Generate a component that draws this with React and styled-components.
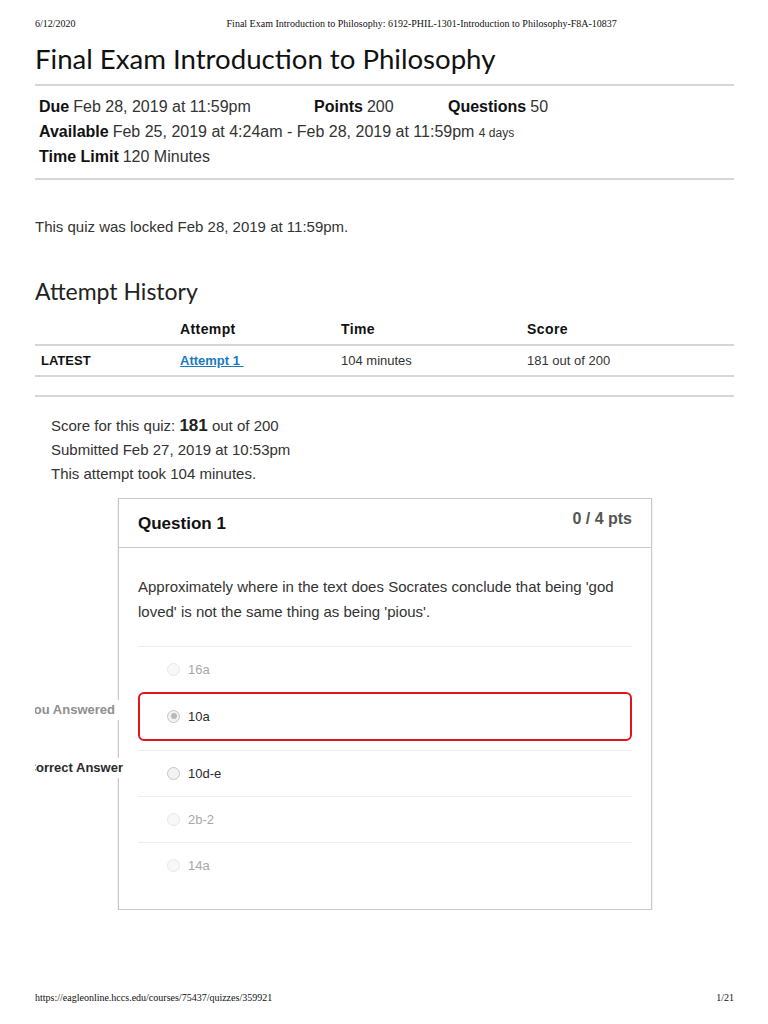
import React from "react";
import styled, { createGlobalStyle } from "styled-components";

const GlobalStyle = createGlobalStyle`
  html, body {
    margin: 0;
    padding: 0;
    background: #fff;
  }
  body {
    font-family: "Liberation Sans", Arial, sans-serif;
    color: #2d2d2d;
  }
`;

const Page = styled.div`
  min-height: 1024px;
  box-sizing: border-box;
  padding: 0 34px 20px 35px;
  display: flex;
  flex-direction: column;
`;

const PrintBar = styled.div`
  display: flex;
  justify-content: space-between;
  font-family: "Liberation Serif", "Times New Roman", serif;
  font-size: 10px;
  line-height: 12px;
  color: #111;

  span.title {
    margin-left: 151px;
    margin-right: auto;
  }
`;

const TopBar = styled(PrintBar)`
  padding-top: 18px;
`;

const BottomBar = styled(PrintBar)`
  margin-top: auto;
`;

const Content = styled.main`
  overflow: hidden;
`;

const Title = styled.h1`
  margin: 12px 0 8px;
  font-family: Lato, "Noto Sans", sans-serif;
  font-weight: 400;
  font-size: 27.6px;
  line-height: 34px;
  color: #111;
`;

const Rule = styled.hr`
  margin: ${(p) => p.$mt || 0}px 0 0;
  border: none;
  border-top: 2px solid #d6d6d6;
`;

const Details = styled.div`
  padding: 9px 0 8px 4px;
  border-bottom: 2px solid #d6d6d6;
`;

const DetailRow = styled.div`
  display: flex;
  font-size: 16px;
  line-height: 24.5px;
  color: #333;
`;

const DetailItem = styled.div`
  width: ${(p) => (p.$w ? `${p.$w}px` : "auto")};
  white-space: nowrap;

  b {
    color: #111;
    margin-right: 4px;
  }
  small {
    font-size: 12px;
  }
`;

const Locked = styled.p`
  margin: 37px 0 0;
  font-size: 15px;
  line-height: 20px;
  color: #333;
`;

const SubTitle = styled.h2`
  margin: 40px 0 0;
  font-family: Lato, "Noto Sans", sans-serif;
  font-weight: 400;
  font-size: 23px;
  line-height: 28px;
  color: #222;
`;

const TableRow = styled.div`
  display: grid;
  grid-template-columns: 145px 161px 186px 1fr;
  align-items: center;
  height: 29px;
  margin-top: ${(p) => (p.$head ? 10 : 0)}px;
  border-bottom: 2px solid #d6d6d6;
  font-size: ${(p) => (p.$head ? 14 : 13)}px;
  font-weight: ${(p) => (p.$head ? 700 : 400)};
  letter-spacing: ${(p) => (p.$head ? "0.4px" : "0")};
  color: ${(p) => (p.$head ? "#111" : "#333")};

  > :first-child {
    padding-left: 6px;
  }
`;

const Latest = styled.span`
  font-weight: 700;
  color: #111;
`;

const AttemptLink = styled.a`
  color: #1b79c0;
  font-weight: 700;
  text-decoration: underline;
  white-space: pre;
`;

const Summary = styled.div`
  padding: 16px 0 0 16px;
  font-size: 15px;
  color: #333;
`;

const SummaryLine = styled.div`
  line-height: ${(p) => p.$lh || 24}px;

  b {
    font-size: 17px;
    color: #222;
  }
`;

const QuestionBox = styled.section`
  margin: 12px 0 0 83px;
  width: 534px;
  box-sizing: border-box;
  border: 1px solid #c9c9c9;
  box-shadow: 0 1px 2px rgba(0, 0, 0, 0.15);
  background: #fff;
`;

const QuestionHeader = styled.header`
  height: 48px;
  display: flex;
  align-items: center;
  justify-content: space-between;
  padding: 0 19px;
  border-bottom: 1px solid #c9c9c9;
`;

const QuestionName = styled.h3`
  margin: 2px 0 0;
  font-size: 17px;
  font-weight: 700;
  color: #111;
`;

const Points = styled.span`
  margin-top: -8px;
  font-size: 16px;
  font-weight: 700;
  color: #555;
`;

const QuestionBody = styled.div`
  padding: 26px 19px 21px;
`;

const QuestionText = styled.p`
  margin: 0 0 22px;
  font-size: 15px;
  line-height: 25px;
  color: #333;
`;

const Answer = styled.div`
  position: relative;
  display: flex;
  align-items: center;
  gap: 8px;
  box-sizing: border-box;
  font-size: 13px;
  color: ${(p) => (p.$muted ? "#a8a8a8" : "#2a2a2a")};
  ${(p) =>
    p.$selected
      ? `
    height: 49px;
    margin-bottom: 9px;
    padding-left: 27px;
    border: 2px solid #e0161b;
    border-radius: 6px;
  `
      : `
    height: 46px;
    padding-left: 29px;
    border-top: 1px solid #ededed;
  `}
`;

const Radio = styled.span`
  width: 11px;
  height: 11px;
  border-radius: 50%;
  border: 1px solid ${(p) => (p.$muted ? "#e8e8e8" : "#c6c6c6")};
  background: ${(p) => (p.$muted ? "#f8f8f8" : "#f2f2f2")};
  display: flex;
  align-items: center;
  justify-content: center;

  &::after {
    content: "";
    display: ${(p) => (p.$checked ? "block" : "none")};
    width: 6px;
    height: 6px;
    border-radius: 50%;
    background: #b9b9b9;
  }
`;

const AnswerLabel = styled.span`
  position: absolute;
  top: ${(p) => p.$top}px;
  right: calc(100% + ${(p) => p.$gap}px);
  height: 20px;
  line-height: 20px;
  padding: 0 ${(p) => p.$pad}px 0 0;
  background: #fff;
  white-space: nowrap;
  font-size: 13px;
  font-weight: 700;
  color: ${(p) => (p.$dim ? "#8f8f8f" : "#2a2a2a")};
`;

const answers = [
  { text: "16a", muted: true },
  { text: "10a", selected: true, label: "You Answered" },
  { text: "10d-e", label: "Correct Answer" },
  { text: "2b-2", muted: true },
  { text: "14a", muted: true },
];

export default function App() {
  return (
    <>
      <GlobalStyle />
      <Page>
        <TopBar>
          <span>6/12/2020</span>
          <span className="title">
            Final Exam Introduction to Philosophy:
            6192-PHIL-1301-Introduction to Philosophy-F8A-10837
          </span>
        </TopBar>

        <Content>
          <Title>Final Exam Introduction to Philosophy</Title>
          <Rule />
          <Details>
            <DetailRow>
              <DetailItem $w={275}>
                <b>Due</b>Feb 28, 2019 at 11:59pm
              </DetailItem>
              <DetailItem $w={134}>
                <b>Points</b>200
              </DetailItem>
              <DetailItem>
                <b>Questions</b>50
              </DetailItem>
            </DetailRow>
            <DetailRow>
              <DetailItem>
                <b>Available</b>Feb 25, 2019 at 4:24am - Feb 28, 2019 at
                11:59pm <small>4 days</small>
              </DetailItem>
            </DetailRow>
            <DetailRow>
              <DetailItem>
                <b>Time Limit</b>120 Minutes
              </DetailItem>
            </DetailRow>
          </Details>

          <Locked>This quiz was locked Feb 28, 2019 at 11:59pm.</Locked>

          <SubTitle>Attempt History</SubTitle>
          <TableRow $head>
            <span />
            <span>Attempt</span>
            <span>Time</span>
            <span>Score</span>
          </TableRow>
          <TableRow>
            <Latest>LATEST</Latest>
            <span>
              <AttemptLink href="#">Attempt 1 </AttemptLink>
            </span>
            <span>104 minutes</span>
            <span>181 out of 200</span>
          </TableRow>
          <Rule $mt={18} />

          <Summary>
            <SummaryLine $lh={25}>
              Score for this quiz: <b>181</b> out of 200
            </SummaryLine>
            <SummaryLine>Submitted Feb 27, 2019 at 10:53pm</SummaryLine>
            <SummaryLine>This attempt took 104 minutes.</SummaryLine>
          </Summary>

          <QuestionBox>
            <QuestionHeader>
              <QuestionName>Question 1</QuestionName>
              <Points>0 / 4 pts</Points>
            </QuestionHeader>
            <QuestionBody>
              <QuestionText>
                Approximately where in the text does Socrates conclude that
                being 'god loved' is not the same thing as being 'pious'.
              </QuestionText>
              {answers.map((a) => (
                <Answer key={a.text} $muted={a.muted} $selected={a.selected}>
                  {a.label && (
                    <AnswerLabel
                      $dim={a.selected}
                      $top={a.selected ? 6 : 7}
                      $gap={a.selected ? 21 : 15}
                      $pad={a.selected ? 4 : 0}
                    >
                      {a.label}
                    </AnswerLabel>
                  )}
                  <Radio $muted={a.muted} $checked={a.selected} />
                  <span>{a.text}</span>
                </Answer>
              ))}
            </QuestionBody>
          </QuestionBox>
        </Content>

        <BottomBar>
          <span>https://eagleonline.hccs.edu/courses/75437/quizzes/359921</span>
          <span>1/21</span>
        </BottomBar>
      </Page>
    </>
  );
}
